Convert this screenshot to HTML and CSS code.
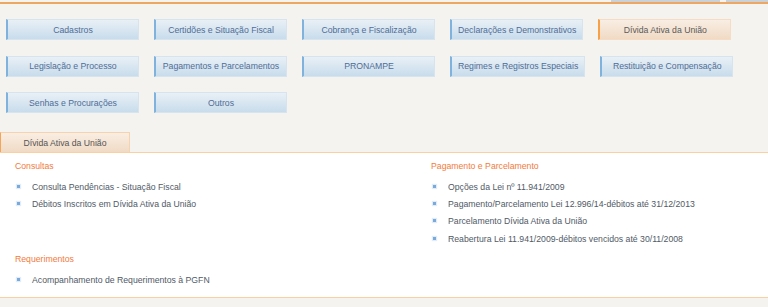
FILE: index.html
```html
<!DOCTYPE html>
<html lang="pt-BR">
<head>
    <meta charset="UTF-8">
    <title>Dívida Ativa da União</title>
    <link rel="stylesheet" href="styles.css">
</head>
<body>

    <div class="topbar">
        <span class="top-tab first"></span>
        <span class="top-tab second"></span>
    </div>

    <!-- Menu de serviços -->
    <div class="menu">
        <div class="menu-row">
            <a class="menu-btn" href="#">Cadastros</a>
            <a class="menu-btn" href="#">Certidões e Situação Fiscal</a>
            <a class="menu-btn" href="#">Cobrança e Fiscalização</a>
            <a class="menu-btn" href="#">Declarações e Demonstrativos</a>
            <a class="menu-btn active" href="#">Dívida Ativa da União</a>
        </div>
        <div class="menu-row">
            <a class="menu-btn" href="#">Legislação e Processo</a>
            <a class="menu-btn" href="#">Pagamentos e Parcelamentos</a>
            <a class="menu-btn" href="#">PRONAMPE</a>
            <a class="menu-btn" href="#">Regimes e Registros Especiais</a>
            <a class="menu-btn" href="#">Restituição e Compensação</a>
        </div>
        <div class="menu-row">
            <a class="menu-btn" href="#">Senhas e Procurações</a>
            <a class="menu-btn" href="#">Outros</a>
        </div>
    </div>

    <div class="tab">Dívida Ativa da União</div>

    <div class="panel">
        <div class="col left">
            <h3>Consultas</h3>
            <ul>
                <li><a href="#">Consulta Pendências - Situação Fiscal</a></li>
                <li><a href="#">Débitos Inscritos em Dívida Ativa da União</a></li>
            </ul>

            <h3 class="spaced">Requerimentos</h3>
            <ul>
                <li><a href="#">Acompanhamento de Requerimentos à PGFN</a></li>
            </ul>
        </div>

        <div class="col right">
            <h3>Pagamento e Parcelamento</h3>
            <ul>
                <li><a href="#">Opções da Lei nº 11.941/2009</a></li>
                <li><a href="#">Pagamento/Parcelamento Lei 12.996/14-débitos até 31/12/2013</a></li>
                <li><a href="#">Parcelamento Dívida Ativa da União</a></li>
                <li><a href="#">Reabertura Lei 11.941/2009-débitos vencidos até 30/11/2008</a></li>
            </ul>
        </div>
    </div>

</body>
</html>
```

FILE: styles.css
```css
body {
    margin: 0;
    padding: 0;
    background-color: #f4f3ef;
    font-family: "Liberation Sans", Arial, sans-serif;
    font-size: 8.7px;
    color: #555;
}

a {
    text-decoration: none;
}

.topbar {
    height: 2px;
    border-bottom: 2px solid #eea763;
    display: flex;
}

.top-tab {
    height: 2px;
    background-color: #c8d0d8;
}

.top-tab.first {
    margin-left: 611px;
    width: 109px;
}

.top-tab.second {
    margin-left: 6px;
    flex: 1;
}

.menu {
    padding: 15px 0 0 6px;
}

.menu-row {
    display: flex;
    margin-bottom: 15.5px;
}

.menu-btn {
    box-sizing: border-box;
    min-width: 133px;
    height: 21px;
    padding: 0 6px;
    margin-right: 15px;
    display: flex;
    align-items: center;
    justify-content: center;
    white-space: nowrap;
    color: #4f6d96;
    background: linear-gradient(#e9f0f6, #c8dcec);
    border: 1px solid #d6e4f0;
    border-left: 2px solid #7fb2dc;
}

.menu-btn.active {
    color: #5a5a5a;
    background: linear-gradient(#f9eee3, #f0dac5);
    border-color: #f6dcc2;
    border-left-color: #f7a048;
}

.tab {
    box-sizing: border-box;
    width: 130px;
    height: 20px;
    margin-top: 19px;
    display: flex;
    align-items: center;
    justify-content: center;
    color: #555;
    background: linear-gradient(#f9eee3, #f0dac5);
    border: 1px solid #f6d3ae;
    border-bottom: none;
    border-left-color: #f5a55a;
}

.panel {
    background-color: #ffffff;
    border-top: 1px solid #fbcf9f;
    border-bottom: 1px solid #fbcf9f;
    display: grid;
    grid-template-columns: 416px 1fr;
    padding: 7.5px 0 7px 15px;
}

.col h3 {
    margin: 0;
    font-size: 8.7px;
    font-weight: normal;
    line-height: 11px;
    color: #f27b3c;
}

.col h3.spaced {
    margin-top: 41px;
}

.col ul {
    list-style: none;
    margin: 7px 0 0 0;
    padding: 0;
}

.col li {
    position: relative;
    line-height: 17.4px;
    padding-left: 17px;
}

.col li::before {
    content: "";
    position: absolute;
    left: 1.5px;
    top: 6px;
    width: 3px;
    height: 3px;
    background-color: #7aaadb;
    box-shadow: 0 0 1px 1px #e2ecf6;
}

.col li a {
    color: #505a66;
}
```
